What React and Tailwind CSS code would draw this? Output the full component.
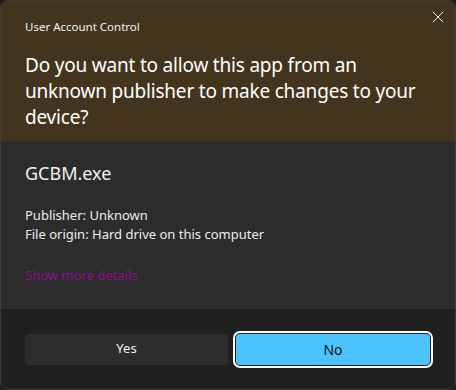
import { X } from "lucide-react"

const font = { fontFamily: '"Segoe UI", "Noto Sans", "Open Sans", sans-serif' }

const App = () => {
  return (
    <div className="w-[456px] h-[390px] bg-[#1c1c1c]" style={font}>
      <div className="w-full h-full rounded-[8px] border border-[#3c3c3c] overflow-hidden flex flex-col">
        {/* Header */}
        <div className="relative bg-[#43351d] h-[140px] pl-[24px] pr-[24px] pt-[17px]">
          <div className="text-[11.5px] leading-[18px] text-[#f0f0f0]">User Account Control</div>
          <button className="absolute top-[6px] right-[7px] w-[20px] h-[20px] flex items-center justify-center text-[#ececec]">
            <X className="w-[20px] h-[20px]" strokeWidth={1.2} />
          </button>
          <h1 className="mt-[16px] text-[19px] leading-[26px] tracking-[-0.2px] text-white font-normal">
            Do you want to allow this app from an unknown publisher to make changes to your device?
          </h1>
        </div>

        {/* Body */}
        <div className="bg-[#2c2c2c] h-[168px] pl-[24px] pt-[19px]">
          <div className="text-[18px] leading-[26px] text-[#f2f2f2]">GCBM.exe</div>
          <div className="mt-[20px] text-[13px] leading-[19px] text-[#ececec]">
            <div>Publisher: Unknown</div>
            <div>File origin: Hard drive on this computer</div>
          </div>
          <a className="block mt-[22px] text-[13px] leading-[19px] text-[#930d93]">Show more details</a>
        </div>

        {/* Footer */}
        <div className="flex-1 bg-[#202020] flex items-center pl-[24px] pr-[22px] gap-[5px]">
          <button className="w-[203px] h-[31px] rounded-[4px] bg-[#2d2d2d] text-[13px] text-[#f2f2f2]">Yes</button>
          <div className="w-[200px] h-[37px] rounded-[7px] border-2 border-white p-[1px] bg-[#202020]">
            <button className="w-full h-full rounded-[4px] bg-[#4cc2ff] text-[14px] text-[#111111]">No</button>
          </div>
        </div>
      </div>
    </div>
  )
}

export default App
